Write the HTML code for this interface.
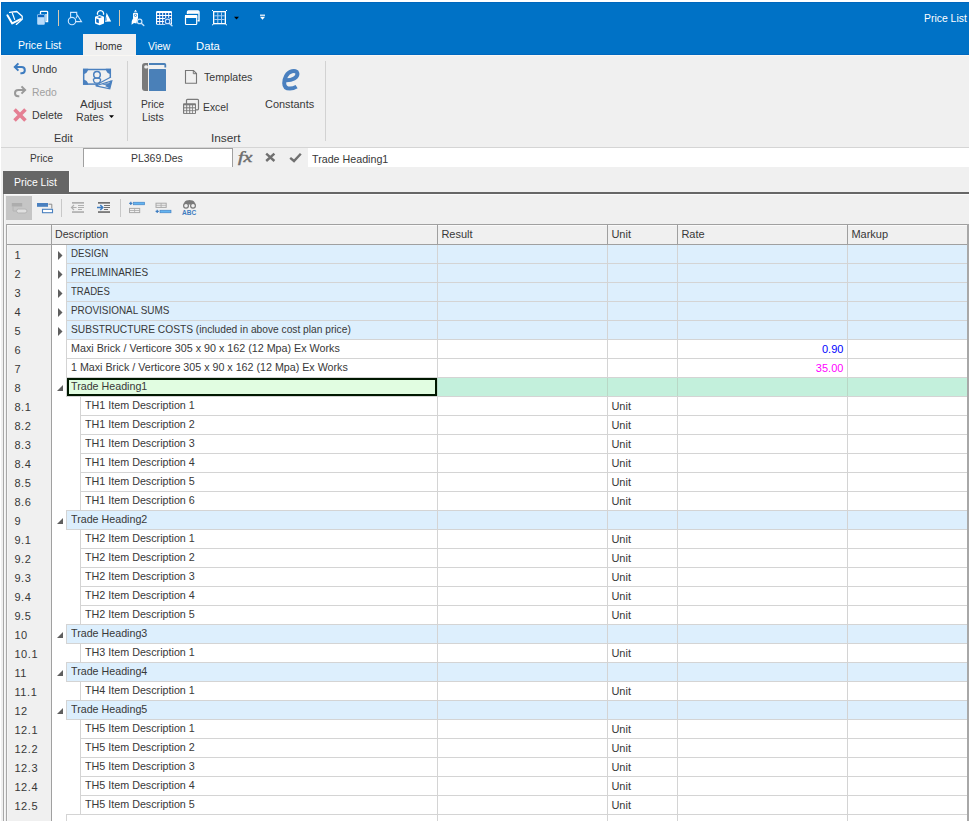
<!DOCTYPE html>
<html><head><meta charset="utf-8"><style>
html,body{margin:0;padding:0;}
body{width:969px;height:821px;overflow:hidden;background:#ffffff;position:relative;font-family:"Liberation Sans",sans-serif;}
.t{position:absolute;white-space:pre;line-height:13px;transform-origin:0 0;}
svg{overflow:visible}
</style></head><body>
<div style="position:absolute;left:1px;top:2px;width:968px;height:53px;background:#0072c6;"></div><div style="position:absolute;left:1px;top:2px;width:968px;height:1px;background:#0067bd;"></div><div style="position:absolute;left:1px;top:2px;width:1px;height:53px;background:#0067bd;"></div><div style="position:absolute;left:1px;top:54px;width:968px;height:1px;background:#0068c0;"></div><div style="position:absolute;left:1px;top:55px;width:968px;height:766px;background:#f0f0f0;"></div><div style="position:absolute;left:1px;top:55px;width:968px;height:1px;background:#f9f7f3;"></div><div style="position:absolute;left:83px;top:34px;width:53px;height:21px;background:#f0f0f0;"></div><div style="position:absolute;left:127px;top:61px;width:1px;height:80px;background:#d2d2d2;"></div><div style="position:absolute;left:325px;top:61px;width:1px;height:80px;background:#d2d2d2;"></div><div style="position:absolute;left:1px;top:147px;width:968px;height:1px;background:#d5d5d5;"></div><div style="position:absolute;left:83px;top:148px;width:150px;height:19px;background:#a0a0a0;"></div><div style="position:absolute;left:84px;top:149px;width:148px;height:18px;background:#ffffff;"></div><div style="position:absolute;left:308px;top:148px;width:661px;height:19px;background:#ffffff;"></div><div style="position:absolute;left:3px;top:171px;width:66px;height:23px;background:#666666;"></div><div style="position:absolute;left:3px;top:192px;width:966px;height:2px;background:#666666;"></div><div style="position:absolute;left:69px;top:171px;width:1px;height:21px;background:#fafafa;"></div><div style="position:absolute;left:3px;top:194px;width:1px;height:700px;background:#a8a8a8;"></div><div style="position:absolute;left:4px;top:194px;width:965px;height:1px;background:#fafafa;"></div><div style="position:absolute;left:6px;top:196px;width:26px;height:24px;background:#c5c5c5;"></div><div style="position:absolute;left:61px;top:199px;width:1px;height:18px;background:#c8c8c8;"></div><div style="position:absolute;left:120px;top:199px;width:1px;height:18px;background:#c8c8c8;"></div><div style="position:absolute;left:6px;top:224px;width:963px;height:1px;background:#a0a0a0;"></div><div style="position:absolute;left:6px;top:224px;width:1px;height:700px;background:#a8a8a8;"></div><div style="position:absolute;left:4px;top:195px;width:1px;height:700px;background:#f8f8f8;"></div><div style="position:absolute;left:7px;top:226px;width:1px;height:700px;background:#f6f6f6;"></div><div style="position:absolute;left:7px;top:225px;width:962px;height:1px;background:#fafafa;"></div><div style="position:absolute;left:967px;top:224px;width:2px;height:700px;background:#a8a8a8;"></div><div style="position:absolute;left:7px;top:244px;width:960px;height:1px;background:#a0a0a0;"></div><div style="position:absolute;left:51px;top:225px;width:1px;height:19px;background:#a0a0a0;"></div><div style="position:absolute;left:437px;top:225px;width:1px;height:19px;background:#a0a0a0;"></div><div style="position:absolute;left:607px;top:225px;width:1px;height:19px;background:#a0a0a0;"></div><div style="position:absolute;left:677px;top:225px;width:1px;height:19px;background:#a0a0a0;"></div><div style="position:absolute;left:847px;top:225px;width:1px;height:19px;background:#a0a0a0;"></div><div style="position:absolute;left:51px;top:245px;width:1px;height:700px;background:#a0a0a0;"></div><div style="position:absolute;left:52px;top:245px;width:14px;height:700px;background:#ffffff;"></div><div style="position:absolute;left:67px;top:245px;width:900px;height:18px;background:#ddeffd;"></div><div style="position:absolute;left:67px;top:263px;width:900px;height:1px;background:#d4d4d4;"></div><div style="position:absolute;left:66px;top:245px;width:1px;height:19px;background:#d4d4d4;"></div><div style="position:absolute;left:437px;top:245px;width:1px;height:18px;background:#d4d4d4;"></div><div style="position:absolute;left:607px;top:245px;width:1px;height:18px;background:#d4d4d4;"></div><div style="position:absolute;left:677px;top:245px;width:1px;height:18px;background:#d4d4d4;"></div><div style="position:absolute;left:847px;top:245px;width:1px;height:18px;background:#d4d4d4;"></div><svg style="position:absolute;left:58px;top:251px" width="5" height="9"><path d="M0 0 L4.5 4.5 L0 9 Z" fill="#5f5f5f"/></svg><div style="position:absolute;left:67px;top:264px;width:900px;height:18px;background:#ddeffd;"></div><div style="position:absolute;left:67px;top:282px;width:900px;height:1px;background:#d4d4d4;"></div><div style="position:absolute;left:66px;top:264px;width:1px;height:19px;background:#d4d4d4;"></div><div style="position:absolute;left:437px;top:264px;width:1px;height:18px;background:#d4d4d4;"></div><div style="position:absolute;left:607px;top:264px;width:1px;height:18px;background:#d4d4d4;"></div><div style="position:absolute;left:677px;top:264px;width:1px;height:18px;background:#d4d4d4;"></div><div style="position:absolute;left:847px;top:264px;width:1px;height:18px;background:#d4d4d4;"></div><svg style="position:absolute;left:58px;top:270px" width="5" height="9"><path d="M0 0 L4.5 4.5 L0 9 Z" fill="#5f5f5f"/></svg><div style="position:absolute;left:67px;top:283px;width:900px;height:18px;background:#ddeffd;"></div><div style="position:absolute;left:67px;top:301px;width:900px;height:1px;background:#d4d4d4;"></div><div style="position:absolute;left:66px;top:283px;width:1px;height:19px;background:#d4d4d4;"></div><div style="position:absolute;left:437px;top:283px;width:1px;height:18px;background:#d4d4d4;"></div><div style="position:absolute;left:607px;top:283px;width:1px;height:18px;background:#d4d4d4;"></div><div style="position:absolute;left:677px;top:283px;width:1px;height:18px;background:#d4d4d4;"></div><div style="position:absolute;left:847px;top:283px;width:1px;height:18px;background:#d4d4d4;"></div><svg style="position:absolute;left:58px;top:289px" width="5" height="9"><path d="M0 0 L4.5 4.5 L0 9 Z" fill="#5f5f5f"/></svg><div style="position:absolute;left:67px;top:302px;width:900px;height:18px;background:#ddeffd;"></div><div style="position:absolute;left:67px;top:320px;width:900px;height:1px;background:#d4d4d4;"></div><div style="position:absolute;left:66px;top:302px;width:1px;height:19px;background:#d4d4d4;"></div><div style="position:absolute;left:437px;top:302px;width:1px;height:18px;background:#d4d4d4;"></div><div style="position:absolute;left:607px;top:302px;width:1px;height:18px;background:#d4d4d4;"></div><div style="position:absolute;left:677px;top:302px;width:1px;height:18px;background:#d4d4d4;"></div><div style="position:absolute;left:847px;top:302px;width:1px;height:18px;background:#d4d4d4;"></div><svg style="position:absolute;left:58px;top:308px" width="5" height="9"><path d="M0 0 L4.5 4.5 L0 9 Z" fill="#5f5f5f"/></svg><div style="position:absolute;left:67px;top:321px;width:900px;height:18px;background:#ddeffd;"></div><div style="position:absolute;left:67px;top:339px;width:900px;height:1px;background:#d4d4d4;"></div><div style="position:absolute;left:66px;top:321px;width:1px;height:19px;background:#d4d4d4;"></div><div style="position:absolute;left:437px;top:321px;width:1px;height:18px;background:#d4d4d4;"></div><div style="position:absolute;left:607px;top:321px;width:1px;height:18px;background:#d4d4d4;"></div><div style="position:absolute;left:677px;top:321px;width:1px;height:18px;background:#d4d4d4;"></div><div style="position:absolute;left:847px;top:321px;width:1px;height:18px;background:#d4d4d4;"></div><svg style="position:absolute;left:58px;top:327px" width="5" height="9"><path d="M0 0 L4.5 4.5 L0 9 Z" fill="#5f5f5f"/></svg><div style="position:absolute;left:67px;top:340px;width:900px;height:18px;background:#ffffff;"></div><div style="position:absolute;left:67px;top:358px;width:900px;height:1px;background:#d4d4d4;"></div><div style="position:absolute;left:66px;top:340px;width:1px;height:19px;background:#d4d4d4;"></div><div style="position:absolute;left:437px;top:340px;width:1px;height:18px;background:#d4d4d4;"></div><div style="position:absolute;left:607px;top:340px;width:1px;height:18px;background:#d4d4d4;"></div><div style="position:absolute;left:677px;top:340px;width:1px;height:18px;background:#d4d4d4;"></div><div style="position:absolute;left:847px;top:340px;width:1px;height:18px;background:#d4d4d4;"></div><div style="position:absolute;left:67px;top:359px;width:900px;height:18px;background:#ffffff;"></div><div style="position:absolute;left:67px;top:377px;width:900px;height:1px;background:#d4d4d4;"></div><div style="position:absolute;left:66px;top:359px;width:1px;height:19px;background:#d4d4d4;"></div><div style="position:absolute;left:437px;top:359px;width:1px;height:18px;background:#d4d4d4;"></div><div style="position:absolute;left:607px;top:359px;width:1px;height:18px;background:#d4d4d4;"></div><div style="position:absolute;left:677px;top:359px;width:1px;height:18px;background:#d4d4d4;"></div><div style="position:absolute;left:847px;top:359px;width:1px;height:18px;background:#d4d4d4;"></div><div style="position:absolute;left:67px;top:378px;width:900px;height:18px;background:#c3f0dc;"></div><div style="position:absolute;left:67px;top:396px;width:900px;height:1px;background:#d4d4d4;"></div><div style="position:absolute;left:66px;top:378px;width:1px;height:19px;background:#d4d4d4;"></div><div style="position:absolute;left:437px;top:378px;width:1px;height:18px;background:#b9d8c6;"></div><div style="position:absolute;left:607px;top:378px;width:1px;height:18px;background:#b9d8c6;"></div><div style="position:absolute;left:677px;top:378px;width:1px;height:18px;background:#b9d8c6;"></div><div style="position:absolute;left:847px;top:378px;width:1px;height:18px;background:#b9d8c6;"></div><svg style="position:absolute;left:56px;top:385px" width="8" height="7"><path d="M7 0 L7 6 L1 6 Z" fill="#5f5f5f"/></svg><div style="position:absolute;left:67px;top:378px;width:366px;height:14px;border:2px solid #001800;background:#e1fde1"></div><div style="position:absolute;left:81px;top:397px;width:886px;height:18px;background:#ffffff;"></div><div style="position:absolute;left:81px;top:415px;width:886px;height:1px;background:#d4d4d4;"></div><div style="position:absolute;left:80px;top:397px;width:1px;height:19px;background:#d4d4d4;"></div><div style="position:absolute;left:66px;top:397px;width:14px;height:19px;background:#ffffff;"></div><div style="position:absolute;left:437px;top:397px;width:1px;height:18px;background:#d4d4d4;"></div><div style="position:absolute;left:607px;top:397px;width:1px;height:18px;background:#d4d4d4;"></div><div style="position:absolute;left:677px;top:397px;width:1px;height:18px;background:#d4d4d4;"></div><div style="position:absolute;left:847px;top:397px;width:1px;height:18px;background:#d4d4d4;"></div><div style="position:absolute;left:81px;top:416px;width:886px;height:18px;background:#ffffff;"></div><div style="position:absolute;left:81px;top:434px;width:886px;height:1px;background:#d4d4d4;"></div><div style="position:absolute;left:80px;top:416px;width:1px;height:19px;background:#d4d4d4;"></div><div style="position:absolute;left:66px;top:416px;width:14px;height:19px;background:#ffffff;"></div><div style="position:absolute;left:437px;top:416px;width:1px;height:18px;background:#d4d4d4;"></div><div style="position:absolute;left:607px;top:416px;width:1px;height:18px;background:#d4d4d4;"></div><div style="position:absolute;left:677px;top:416px;width:1px;height:18px;background:#d4d4d4;"></div><div style="position:absolute;left:847px;top:416px;width:1px;height:18px;background:#d4d4d4;"></div><div style="position:absolute;left:81px;top:435px;width:886px;height:18px;background:#ffffff;"></div><div style="position:absolute;left:81px;top:453px;width:886px;height:1px;background:#d4d4d4;"></div><div style="position:absolute;left:80px;top:435px;width:1px;height:19px;background:#d4d4d4;"></div><div style="position:absolute;left:66px;top:435px;width:14px;height:19px;background:#ffffff;"></div><div style="position:absolute;left:437px;top:435px;width:1px;height:18px;background:#d4d4d4;"></div><div style="position:absolute;left:607px;top:435px;width:1px;height:18px;background:#d4d4d4;"></div><div style="position:absolute;left:677px;top:435px;width:1px;height:18px;background:#d4d4d4;"></div><div style="position:absolute;left:847px;top:435px;width:1px;height:18px;background:#d4d4d4;"></div><div style="position:absolute;left:81px;top:454px;width:886px;height:18px;background:#ffffff;"></div><div style="position:absolute;left:81px;top:472px;width:886px;height:1px;background:#d4d4d4;"></div><div style="position:absolute;left:80px;top:454px;width:1px;height:19px;background:#d4d4d4;"></div><div style="position:absolute;left:66px;top:454px;width:14px;height:19px;background:#ffffff;"></div><div style="position:absolute;left:437px;top:454px;width:1px;height:18px;background:#d4d4d4;"></div><div style="position:absolute;left:607px;top:454px;width:1px;height:18px;background:#d4d4d4;"></div><div style="position:absolute;left:677px;top:454px;width:1px;height:18px;background:#d4d4d4;"></div><div style="position:absolute;left:847px;top:454px;width:1px;height:18px;background:#d4d4d4;"></div><div style="position:absolute;left:81px;top:473px;width:886px;height:18px;background:#ffffff;"></div><div style="position:absolute;left:81px;top:491px;width:886px;height:1px;background:#d4d4d4;"></div><div style="position:absolute;left:80px;top:473px;width:1px;height:19px;background:#d4d4d4;"></div><div style="position:absolute;left:66px;top:473px;width:14px;height:19px;background:#ffffff;"></div><div style="position:absolute;left:437px;top:473px;width:1px;height:18px;background:#d4d4d4;"></div><div style="position:absolute;left:607px;top:473px;width:1px;height:18px;background:#d4d4d4;"></div><div style="position:absolute;left:677px;top:473px;width:1px;height:18px;background:#d4d4d4;"></div><div style="position:absolute;left:847px;top:473px;width:1px;height:18px;background:#d4d4d4;"></div><div style="position:absolute;left:81px;top:492px;width:886px;height:18px;background:#ffffff;"></div><div style="position:absolute;left:81px;top:510px;width:886px;height:1px;background:#d4d4d4;"></div><div style="position:absolute;left:80px;top:492px;width:1px;height:19px;background:#d4d4d4;"></div><div style="position:absolute;left:66px;top:492px;width:14px;height:19px;background:#ffffff;"></div><div style="position:absolute;left:437px;top:492px;width:1px;height:18px;background:#d4d4d4;"></div><div style="position:absolute;left:607px;top:492px;width:1px;height:18px;background:#d4d4d4;"></div><div style="position:absolute;left:677px;top:492px;width:1px;height:18px;background:#d4d4d4;"></div><div style="position:absolute;left:847px;top:492px;width:1px;height:18px;background:#d4d4d4;"></div><div style="position:absolute;left:67px;top:511px;width:900px;height:18px;background:#ddeffd;"></div><div style="position:absolute;left:67px;top:529px;width:900px;height:1px;background:#d4d4d4;"></div><div style="position:absolute;left:66px;top:511px;width:1px;height:19px;background:#d4d4d4;"></div><div style="position:absolute;left:66px;top:510px;width:15px;height:1px;background:#d4d4d4;"></div><div style="position:absolute;left:437px;top:511px;width:1px;height:18px;background:#d4d4d4;"></div><div style="position:absolute;left:607px;top:511px;width:1px;height:18px;background:#d4d4d4;"></div><div style="position:absolute;left:677px;top:511px;width:1px;height:18px;background:#d4d4d4;"></div><div style="position:absolute;left:847px;top:511px;width:1px;height:18px;background:#d4d4d4;"></div><svg style="position:absolute;left:56px;top:518px" width="8" height="7"><path d="M7 0 L7 6 L1 6 Z" fill="#5f5f5f"/></svg><div style="position:absolute;left:81px;top:530px;width:886px;height:18px;background:#ffffff;"></div><div style="position:absolute;left:81px;top:548px;width:886px;height:1px;background:#d4d4d4;"></div><div style="position:absolute;left:80px;top:530px;width:1px;height:19px;background:#d4d4d4;"></div><div style="position:absolute;left:66px;top:530px;width:14px;height:19px;background:#ffffff;"></div><div style="position:absolute;left:437px;top:530px;width:1px;height:18px;background:#d4d4d4;"></div><div style="position:absolute;left:607px;top:530px;width:1px;height:18px;background:#d4d4d4;"></div><div style="position:absolute;left:677px;top:530px;width:1px;height:18px;background:#d4d4d4;"></div><div style="position:absolute;left:847px;top:530px;width:1px;height:18px;background:#d4d4d4;"></div><div style="position:absolute;left:81px;top:549px;width:886px;height:18px;background:#ffffff;"></div><div style="position:absolute;left:81px;top:567px;width:886px;height:1px;background:#d4d4d4;"></div><div style="position:absolute;left:80px;top:549px;width:1px;height:19px;background:#d4d4d4;"></div><div style="position:absolute;left:66px;top:549px;width:14px;height:19px;background:#ffffff;"></div><div style="position:absolute;left:437px;top:549px;width:1px;height:18px;background:#d4d4d4;"></div><div style="position:absolute;left:607px;top:549px;width:1px;height:18px;background:#d4d4d4;"></div><div style="position:absolute;left:677px;top:549px;width:1px;height:18px;background:#d4d4d4;"></div><div style="position:absolute;left:847px;top:549px;width:1px;height:18px;background:#d4d4d4;"></div><div style="position:absolute;left:81px;top:568px;width:886px;height:18px;background:#ffffff;"></div><div style="position:absolute;left:81px;top:586px;width:886px;height:1px;background:#d4d4d4;"></div><div style="position:absolute;left:80px;top:568px;width:1px;height:19px;background:#d4d4d4;"></div><div style="position:absolute;left:66px;top:568px;width:14px;height:19px;background:#ffffff;"></div><div style="position:absolute;left:437px;top:568px;width:1px;height:18px;background:#d4d4d4;"></div><div style="position:absolute;left:607px;top:568px;width:1px;height:18px;background:#d4d4d4;"></div><div style="position:absolute;left:677px;top:568px;width:1px;height:18px;background:#d4d4d4;"></div><div style="position:absolute;left:847px;top:568px;width:1px;height:18px;background:#d4d4d4;"></div><div style="position:absolute;left:81px;top:587px;width:886px;height:18px;background:#ffffff;"></div><div style="position:absolute;left:81px;top:605px;width:886px;height:1px;background:#d4d4d4;"></div><div style="position:absolute;left:80px;top:587px;width:1px;height:19px;background:#d4d4d4;"></div><div style="position:absolute;left:66px;top:587px;width:14px;height:19px;background:#ffffff;"></div><div style="position:absolute;left:437px;top:587px;width:1px;height:18px;background:#d4d4d4;"></div><div style="position:absolute;left:607px;top:587px;width:1px;height:18px;background:#d4d4d4;"></div><div style="position:absolute;left:677px;top:587px;width:1px;height:18px;background:#d4d4d4;"></div><div style="position:absolute;left:847px;top:587px;width:1px;height:18px;background:#d4d4d4;"></div><div style="position:absolute;left:81px;top:606px;width:886px;height:18px;background:#ffffff;"></div><div style="position:absolute;left:81px;top:624px;width:886px;height:1px;background:#d4d4d4;"></div><div style="position:absolute;left:80px;top:606px;width:1px;height:19px;background:#d4d4d4;"></div><div style="position:absolute;left:66px;top:606px;width:14px;height:19px;background:#ffffff;"></div><div style="position:absolute;left:437px;top:606px;width:1px;height:18px;background:#d4d4d4;"></div><div style="position:absolute;left:607px;top:606px;width:1px;height:18px;background:#d4d4d4;"></div><div style="position:absolute;left:677px;top:606px;width:1px;height:18px;background:#d4d4d4;"></div><div style="position:absolute;left:847px;top:606px;width:1px;height:18px;background:#d4d4d4;"></div><div style="position:absolute;left:67px;top:625px;width:900px;height:18px;background:#ddeffd;"></div><div style="position:absolute;left:67px;top:643px;width:900px;height:1px;background:#d4d4d4;"></div><div style="position:absolute;left:66px;top:625px;width:1px;height:19px;background:#d4d4d4;"></div><div style="position:absolute;left:66px;top:624px;width:15px;height:1px;background:#d4d4d4;"></div><div style="position:absolute;left:437px;top:625px;width:1px;height:18px;background:#d4d4d4;"></div><div style="position:absolute;left:607px;top:625px;width:1px;height:18px;background:#d4d4d4;"></div><div style="position:absolute;left:677px;top:625px;width:1px;height:18px;background:#d4d4d4;"></div><div style="position:absolute;left:847px;top:625px;width:1px;height:18px;background:#d4d4d4;"></div><svg style="position:absolute;left:56px;top:632px" width="8" height="7"><path d="M7 0 L7 6 L1 6 Z" fill="#5f5f5f"/></svg><div style="position:absolute;left:81px;top:644px;width:886px;height:18px;background:#ffffff;"></div><div style="position:absolute;left:81px;top:662px;width:886px;height:1px;background:#d4d4d4;"></div><div style="position:absolute;left:80px;top:644px;width:1px;height:19px;background:#d4d4d4;"></div><div style="position:absolute;left:66px;top:644px;width:14px;height:19px;background:#ffffff;"></div><div style="position:absolute;left:437px;top:644px;width:1px;height:18px;background:#d4d4d4;"></div><div style="position:absolute;left:607px;top:644px;width:1px;height:18px;background:#d4d4d4;"></div><div style="position:absolute;left:677px;top:644px;width:1px;height:18px;background:#d4d4d4;"></div><div style="position:absolute;left:847px;top:644px;width:1px;height:18px;background:#d4d4d4;"></div><div style="position:absolute;left:67px;top:663px;width:900px;height:18px;background:#ddeffd;"></div><div style="position:absolute;left:67px;top:681px;width:900px;height:1px;background:#d4d4d4;"></div><div style="position:absolute;left:66px;top:663px;width:1px;height:19px;background:#d4d4d4;"></div><div style="position:absolute;left:66px;top:662px;width:15px;height:1px;background:#d4d4d4;"></div><div style="position:absolute;left:437px;top:663px;width:1px;height:18px;background:#d4d4d4;"></div><div style="position:absolute;left:607px;top:663px;width:1px;height:18px;background:#d4d4d4;"></div><div style="position:absolute;left:677px;top:663px;width:1px;height:18px;background:#d4d4d4;"></div><div style="position:absolute;left:847px;top:663px;width:1px;height:18px;background:#d4d4d4;"></div><svg style="position:absolute;left:56px;top:670px" width="8" height="7"><path d="M7 0 L7 6 L1 6 Z" fill="#5f5f5f"/></svg><div style="position:absolute;left:81px;top:682px;width:886px;height:18px;background:#ffffff;"></div><div style="position:absolute;left:81px;top:700px;width:886px;height:1px;background:#d4d4d4;"></div><div style="position:absolute;left:80px;top:682px;width:1px;height:19px;background:#d4d4d4;"></div><div style="position:absolute;left:66px;top:682px;width:14px;height:19px;background:#ffffff;"></div><div style="position:absolute;left:437px;top:682px;width:1px;height:18px;background:#d4d4d4;"></div><div style="position:absolute;left:607px;top:682px;width:1px;height:18px;background:#d4d4d4;"></div><div style="position:absolute;left:677px;top:682px;width:1px;height:18px;background:#d4d4d4;"></div><div style="position:absolute;left:847px;top:682px;width:1px;height:18px;background:#d4d4d4;"></div><div style="position:absolute;left:67px;top:701px;width:900px;height:18px;background:#ddeffd;"></div><div style="position:absolute;left:67px;top:719px;width:900px;height:1px;background:#d4d4d4;"></div><div style="position:absolute;left:66px;top:701px;width:1px;height:19px;background:#d4d4d4;"></div><div style="position:absolute;left:66px;top:700px;width:15px;height:1px;background:#d4d4d4;"></div><div style="position:absolute;left:437px;top:701px;width:1px;height:18px;background:#d4d4d4;"></div><div style="position:absolute;left:607px;top:701px;width:1px;height:18px;background:#d4d4d4;"></div><div style="position:absolute;left:677px;top:701px;width:1px;height:18px;background:#d4d4d4;"></div><div style="position:absolute;left:847px;top:701px;width:1px;height:18px;background:#d4d4d4;"></div><svg style="position:absolute;left:56px;top:708px" width="8" height="7"><path d="M7 0 L7 6 L1 6 Z" fill="#5f5f5f"/></svg><div style="position:absolute;left:81px;top:720px;width:886px;height:18px;background:#ffffff;"></div><div style="position:absolute;left:81px;top:738px;width:886px;height:1px;background:#d4d4d4;"></div><div style="position:absolute;left:80px;top:720px;width:1px;height:19px;background:#d4d4d4;"></div><div style="position:absolute;left:66px;top:720px;width:14px;height:19px;background:#ffffff;"></div><div style="position:absolute;left:437px;top:720px;width:1px;height:18px;background:#d4d4d4;"></div><div style="position:absolute;left:607px;top:720px;width:1px;height:18px;background:#d4d4d4;"></div><div style="position:absolute;left:677px;top:720px;width:1px;height:18px;background:#d4d4d4;"></div><div style="position:absolute;left:847px;top:720px;width:1px;height:18px;background:#d4d4d4;"></div><div style="position:absolute;left:81px;top:739px;width:886px;height:18px;background:#ffffff;"></div><div style="position:absolute;left:81px;top:757px;width:886px;height:1px;background:#d4d4d4;"></div><div style="position:absolute;left:80px;top:739px;width:1px;height:19px;background:#d4d4d4;"></div><div style="position:absolute;left:66px;top:739px;width:14px;height:19px;background:#ffffff;"></div><div style="position:absolute;left:437px;top:739px;width:1px;height:18px;background:#d4d4d4;"></div><div style="position:absolute;left:607px;top:739px;width:1px;height:18px;background:#d4d4d4;"></div><div style="position:absolute;left:677px;top:739px;width:1px;height:18px;background:#d4d4d4;"></div><div style="position:absolute;left:847px;top:739px;width:1px;height:18px;background:#d4d4d4;"></div><div style="position:absolute;left:81px;top:758px;width:886px;height:18px;background:#ffffff;"></div><div style="position:absolute;left:81px;top:776px;width:886px;height:1px;background:#d4d4d4;"></div><div style="position:absolute;left:80px;top:758px;width:1px;height:19px;background:#d4d4d4;"></div><div style="position:absolute;left:66px;top:758px;width:14px;height:19px;background:#ffffff;"></div><div style="position:absolute;left:437px;top:758px;width:1px;height:18px;background:#d4d4d4;"></div><div style="position:absolute;left:607px;top:758px;width:1px;height:18px;background:#d4d4d4;"></div><div style="position:absolute;left:677px;top:758px;width:1px;height:18px;background:#d4d4d4;"></div><div style="position:absolute;left:847px;top:758px;width:1px;height:18px;background:#d4d4d4;"></div><div style="position:absolute;left:81px;top:777px;width:886px;height:18px;background:#ffffff;"></div><div style="position:absolute;left:81px;top:795px;width:886px;height:1px;background:#d4d4d4;"></div><div style="position:absolute;left:80px;top:777px;width:1px;height:19px;background:#d4d4d4;"></div><div style="position:absolute;left:66px;top:777px;width:14px;height:19px;background:#ffffff;"></div><div style="position:absolute;left:437px;top:777px;width:1px;height:18px;background:#d4d4d4;"></div><div style="position:absolute;left:607px;top:777px;width:1px;height:18px;background:#d4d4d4;"></div><div style="position:absolute;left:677px;top:777px;width:1px;height:18px;background:#d4d4d4;"></div><div style="position:absolute;left:847px;top:777px;width:1px;height:18px;background:#d4d4d4;"></div><div style="position:absolute;left:81px;top:796px;width:886px;height:18px;background:#ffffff;"></div><div style="position:absolute;left:81px;top:814px;width:886px;height:1px;background:#d4d4d4;"></div><div style="position:absolute;left:80px;top:796px;width:1px;height:19px;background:#d4d4d4;"></div><div style="position:absolute;left:66px;top:796px;width:14px;height:19px;background:#ffffff;"></div><div style="position:absolute;left:437px;top:796px;width:1px;height:18px;background:#d4d4d4;"></div><div style="position:absolute;left:607px;top:796px;width:1px;height:18px;background:#d4d4d4;"></div><div style="position:absolute;left:677px;top:796px;width:1px;height:18px;background:#d4d4d4;"></div><div style="position:absolute;left:847px;top:796px;width:1px;height:18px;background:#d4d4d4;"></div><div style="position:absolute;left:67px;top:815px;width:900px;height:18px;background:#ffffff;"></div><div style="position:absolute;left:67px;top:833px;width:900px;height:1px;background:#d4d4d4;"></div><div style="position:absolute;left:66px;top:815px;width:1px;height:19px;background:#d4d4d4;"></div><div style="position:absolute;left:66px;top:814px;width:15px;height:1px;background:#d4d4d4;"></div><div style="position:absolute;left:437px;top:815px;width:1px;height:18px;background:#d4d4d4;"></div><div style="position:absolute;left:607px;top:815px;width:1px;height:18px;background:#d4d4d4;"></div><div style="position:absolute;left:677px;top:815px;width:1px;height:18px;background:#d4d4d4;"></div><div style="position:absolute;left:847px;top:815px;width:1px;height:18px;background:#d4d4d4;"></div>
<svg style="position:absolute;left:0;top:0" width="969" height="821" viewBox="0 0 969 821">
<!-- QAT icons (white on blue) -->
<g fill="none" stroke="#ffffff" stroke-linecap="round" stroke-linejoin="round">
  <path d="M7.4 15.3 L12.2 23.4 L20.6 19.2" stroke-width="2"/>
  <path d="M9.6 12.4 L16.8 11.5 L22.2 16.3 L22.2 19.2 L16.3 24.4" stroke-width="1.3"/>
  <path d="M12.3 13 L14.6 19.4" stroke-width="1.2"/>
</g>
<!-- books -->
<path d="M40.5 14 L40.5 12 Q40.5 11.3 41.3 11.3 L46.8 11.3 Q47.6 11.3 47.6 12 L47.6 21.6 L46 21.6 L46 14" fill="none" stroke="#ffffff" stroke-width="1.3"/>
<rect x="37.2" y="14.2" width="7.6" height="10.5" rx="1" fill="#b9dcfb"/>
<rect x="37.8" y="14.8" width="6.4" height="2.4" fill="#0a64c0"/>
<!-- shapes outline -->
<g fill="none" stroke="#cfe6ff" stroke-width="1.1">
  <path d="M70.6 17.6 L70.6 12.4 L76.7 12.4 L76.7 15.5"/>
  <circle cx="72" cy="21.1" r="3.7"/>
  <path d="M76 18.2 L77.5 15.3 L81.5 21.6 L75.8 21.6"/>
</g>
<!-- 3d shapes -->
<path d="M97.6 14.8 A3.1 3.1 0 1 1 103.4 14.8" fill="none" stroke="#ffffff" stroke-width="1.3"/>
<path d="M95 16.8 L99.6 15 L104 16.8 L104 23.4 L99.6 25.2 L95 23.4 Z" fill="#ffffff"/>
<path d="M96.2 18.4 L98.8 19.6 L98.8 23.2 L96.2 22.2 Z" fill="#0a6ac4"/>
<path d="M97.2 17 L99.6 16.2 L102 17 L99.6 17.9 Z" fill="#0a6ac4"/>
<path d="M106.6 12.8 L111.2 21.4 L105 21.8 Z" fill="#ffffff"/>
<path d="M106.2 16.5 L106.6 20.4 L105.4 20.7 Z" fill="#0a6ac4"/>
<!-- rocket -->
<path d="M134 11.8 L135.5 9.8 L137 11.8 Z" fill="#ffffff"/>
<rect x="133" y="12.8" width="5" height="6.5" rx="1.2" fill="#ffffff"/>
<circle cx="135.5" cy="15.4" r="1.1" fill="none" stroke="#2a84d0" stroke-width="0.9"/>
<path d="M133 18.5 L137.5 18.5 L136.5 23.5 L134 23 L131.5 24.8 Q131 21 133 18.5 Z" fill="#ffffff"/>
<circle cx="139.6" cy="21.4" r="2.3" fill="none" stroke="#c8e2fa" stroke-width="1.2"/>
<path d="M141.3 23.2 L143.8 25.6" stroke="#c8e2fa" stroke-width="1.4" stroke-linecap="round"/>
<!-- grid + magnifier -->
<rect x="156" y="11" width="16" height="13.8" rx="1.2" fill="#ffffff"/>
<g fill="#0a62c0">
  <rect x="157.2" y="13" width="2" height="2"/><rect x="160.2" y="13" width="2" height="2"/><rect x="163.2" y="13" width="2" height="2"/><rect x="166.2" y="13" width="2" height="2"/><rect x="169.2" y="13" width="2" height="2"/>
  <rect x="157.2" y="16" width="2" height="2"/><rect x="160.2" y="16" width="2" height="2"/><rect x="163.2" y="16" width="2" height="2"/><rect x="166.2" y="16" width="2" height="2"/><rect x="169.2" y="16" width="2" height="2"/>
  <rect x="157.2" y="19" width="2" height="2"/><rect x="160.2" y="19" width="2" height="2"/><rect x="163.2" y="19" width="2" height="2"/>
  <rect x="157.2" y="22" width="2" height="2"/><rect x="160.2" y="22" width="2" height="2"/><rect x="163.2" y="22" width="2" height="2"/>
</g>
<circle cx="167.6" cy="21.4" r="3.6" fill="#0a62c0"/>
<circle cx="167.6" cy="21.4" r="2.3" fill="none" stroke="#c8e2fa" stroke-width="1.2"/>
<path d="M169.3 23.2 L172 25.8" stroke="#c8e2fa" stroke-width="1.4" stroke-linecap="round"/>
<!-- windows -->
<path d="M187.5 14 L187.5 12 Q187.5 11 188.5 11 L198 11 Q199 11 199 12 L199 20.8 L197.6 20.8" fill="none" stroke="#ffffff" stroke-width="1.4"/>
<rect x="187.2" y="11.2" width="11.5" height="2.6" fill="#ffffff"/>
<rect x="185.5" y="15.5" width="11.2" height="9" rx="0.8" fill="none" stroke="#ffffff" stroke-width="1.2"/>
<rect x="185" y="15" width="12.2" height="3" fill="#ffffff"/>
<!-- grid -->
<g fill="#ffffff">
  <rect x="213" y="11" width="13" height="1.3"/><rect x="213" y="23" width="13" height="1.3"/>
  <rect x="213" y="11" width="1.3" height="13.3"/><rect x="224.7" y="11" width="1.3" height="13.3"/>
  <rect x="212" y="10" width="1" height="1"/><rect x="226" y="10" width="1" height="1"/><rect x="212" y="24.3" width="1" height="1"/><rect x="226" y="24.3" width="1" height="1"/>
</g>
<g fill="#a9cdf2">
  <rect x="217.3" y="12.3" width="1" height="10.7"/><rect x="221" y="12.3" width="1" height="10.7"/>
  <rect x="214.3" y="15.3" width="10.4" height="1"/><rect x="214.3" y="19" width="10.4" height="1"/>
</g>
<path d="M234 16.8 L239 16.8 L236.5 19.6 Z" fill="#000000"/>
<rect x="260" y="14.6" width="5" height="1.2" fill="#ffffff"/>
<path d="M260 16.8 L265 16.8 L262.5 19.8 Z" fill="#ffffff"/>
<!-- QAT separators -->
<rect x="58" y="10" width="1" height="16" fill="#d7c9b0"/>
<rect x="119" y="10" width="1" height="16" fill="#d7c9b0"/>

<!-- ribbon icons -->
<path d="M14.6 67 L21.5 67 Q24.8 67 24.8 70.2 Q24.8 73.2 21.6 73.2 L20.4 73.2" fill="none" stroke="#3d7cc0" stroke-width="2"/>
<path d="M18.4 63.4 L14.8 67 L18.4 70.6" fill="none" stroke="#3d7cc0" stroke-width="2"/>
<path d="M25.2 90 L18.4 90 Q15 90 15 93.2 Q15 96.2 18.2 96.2 L19.3 96.2" fill="none" stroke="#999999" stroke-width="2"/>
<path d="M21.5 86.4 L25.1 90 L21.5 93.6" fill="none" stroke="#999999" stroke-width="2"/>
<path d="M15.8 110.8 L24.2 119.2 M24.2 110.8 L15.8 119.2" stroke="#e57f93" stroke-width="3.6" stroke-linecap="square"/>
<!-- adjust rates -->
<defs><clipPath id="note"><rect x="83" y="68.8" width="28" height="16"/></clipPath></defs>
<rect x="83.7" y="69.5" width="26.6" height="14.6" fill="none" stroke="#4a80bf" stroke-width="1.5"/>
<g clip-path="url(#note)" fill="#4a80bf">
  <circle cx="83" cy="68.8" r="5.2"/><circle cx="111" cy="68.8" r="5.2"/><circle cx="83" cy="84.8" r="5.2"/>
</g>
<circle cx="97" cy="74.7" r="3.3" fill="none" stroke="#4a80bf" stroke-width="1.5"/>
<path d="M93.4 79.2 Q94.5 78.2 97 78.2 Q99.5 78.2 100.6 79.2 Q100.6 83.2 97 83.2 Q93.4 83.2 93.4 79.2 Z" fill="none" stroke="#4a80bf" stroke-width="1.3"/>
<path d="M95 86 L112 76.5 L112 80 L98 87 Z" fill="#f0f0f0"/>
<path d="M95.5 85.3 L111 77" fill="none" stroke="#4a80bf" stroke-width="1.2"/>
<path d="M95.8 85.8 L111.8 81 L109.8 88.8 Z" fill="none" stroke="#4a80bf" stroke-width="1.2"/>
<path d="M105 86 L111.6 81.3 L109.8 88.6 Z" fill="#4a80bf"/>
<path d="M109 115.2 L114 115.2 L111.5 118 Z" fill="#000000"/>
<!-- price lists book -->
<path d="M145 63 L148 63 L148 91 L145 91 Q142 91 142 88 L142 66 Q142 63 145 63 Z" fill="#7a7a7a"/>
<rect x="144.2" y="65.2" width="3.8" height="3.4" rx="1.6" fill="#f0f0f0"/>
<rect x="149" y="69" width="17" height="22" rx="0.6" fill="#4a80b8"/>
<path d="M149 64 L164.5 64 Q165.3 64 165.3 64.8 L165.3 67.6" fill="none" stroke="#4a80b8" stroke-width="1.8"/>
<!-- templates page -->
<path d="M185.5 70.5 L193.5 70.5 L196.5 73.5 L196.5 83.3 L185.5 83.3 Z" fill="none" stroke="#767676" stroke-width="1.1"/>
<path d="M193.3 70.5 L193.3 73.7 L196.5 73.7" fill="none" stroke="#767676" stroke-width="1"/>
<!-- excel grids -->
<rect x="186.5" y="99.3" width="12" height="10.5" rx="1" fill="none" stroke="#7a7a7a" stroke-width="1.2"/>
<rect x="183" y="103.2" width="13" height="10.8" rx="1" fill="#7a7a7a"/>
<g fill="#f0f0f0">
 <rect x="184.2" y="105.3" width="2" height="2"/><rect x="187.2" y="105.3" width="2" height="2"/><rect x="190.2" y="105.3" width="2" height="2"/><rect x="193" y="105.3" width="2" height="2"/>
 <rect x="184.2" y="108.3" width="2" height="2"/><rect x="187.2" y="108.3" width="2" height="2"/><rect x="190.2" y="108.3" width="2" height="2"/><rect x="193" y="108.3" width="2" height="2"/>
 <rect x="184.2" y="111.1" width="2" height="2"/><rect x="187.2" y="111.1" width="2" height="2"/><rect x="190.2" y="111.1" width="2" height="2"/><rect x="193" y="111.1" width="2" height="2"/>
</g>
<!-- constants e -->
<path d="M285.8 80.2 C292 80.4 298 77.6 297.4 73.4 C297 71 294.2 70.9 292 71.3 C286.6 72.4 284.2 78.6 284.2 83.2 C284.2 87.2 286.8 88.6 290 88.6 C292.4 88.6 294.6 87.8 296.6 86.6" fill="none" stroke="#4a80bf" stroke-width="4"/>
<!-- formula bar icons -->
<text x="238" y="161.6" font-family="Liberation Serif" font-style="italic" font-size="15" fill="#6e6e6e" stroke="#6e6e6e" stroke-width="0.45" textLength="14.5" lengthAdjust="spacingAndGlyphs">fx</text>
<path d="M266.2 153.6 L274.4 161 M274.4 153.6 L266.2 161" stroke="#707070" stroke-width="2.4"/>
<path d="M290.2 157.8 L294 161 L300.8 153.8" fill="none" stroke="#707070" stroke-width="2.4"/>

<!-- toolbar icons -->
<rect x="11.8" y="203" width="10.4" height="3.5" fill="#adadad"/>
<path d="M13 206.5 L13 211 L16 211" fill="none" stroke="#b4b4b4" stroke-width="1"/>
<rect x="16.5" y="209" width="10.5" height="4" rx="2" fill="#e0e0e0" stroke="#b4b4b4" stroke-width="1"/>
<rect x="37" y="203" width="11" height="3.8" fill="#4a80bf"/>
<path d="M48.5 204.2 L51.8 204.2 L51.8 208.5" fill="none" stroke="#8a8a8a" stroke-width="1"/>
<rect x="42.5" y="209.3" width="10" height="3.4" fill="#ffffff" stroke="#4a80bf" stroke-width="1.1"/>
<!-- outdent -->
<g fill="#b0b0b0">
 <rect x="72" y="202" width="12" height="1.7"/><rect x="72" y="211.2" width="12" height="1.7"/>
 <rect x="78" y="205" width="6" height="1"/><rect x="78" y="207" width="6" height="1"/><rect x="78" y="209" width="4" height="1"/>
</g>
<path d="M76.6 207.5 L71.6 207.5 M74 205 L71.5 207.5 L74 210" fill="none" stroke="#b0b0b0" stroke-width="1.2"/>
<!-- indent -->
<g fill="#707070">
 <rect x="98" y="202" width="12" height="1.7"/><rect x="98" y="211.2" width="12" height="1.7"/>
 <rect x="104" y="205" width="6" height="1"/><rect x="104" y="207" width="6" height="1"/><rect x="104" y="209" width="4" height="1"/>
</g>
<path d="M97 207.5 L102.5 207.5 M100.3 205 L102.8 207.5 L100.3 210" fill="none" stroke="#3d7cc0" stroke-width="1.5"/>
<!-- insert row above -->
<path d="M129.2 203.4 L132.4 203.4 M130.8 201.8 L130.8 205" stroke="#3d7cc0" stroke-width="1.2"/>
<rect x="133.6" y="202.2" width="11" height="2.6" fill="#63b4f0" stroke="#3d7cc0" stroke-width="0.6"/>
<rect x="129.5" y="208.4" width="10.2" height="4.2" fill="none" stroke="#a8a8a8" stroke-width="1"/>
<path d="M129.5 210.5 L139.7 210.5 M134.6 208.4 L134.6 212.6" stroke="#a8a8a8" stroke-width="0.8"/>
<!-- insert row below -->
<rect x="156" y="203.2" width="10.2" height="4.2" fill="none" stroke="#a8a8a8" stroke-width="1"/>
<path d="M156 205.3 L166.2 205.3 M161.1 203.2 L161.1 207.4" stroke="#a8a8a8" stroke-width="0.8"/>
<path d="M155.6 211.4 L158.8 211.4 M157.2 209.8 L157.2 213" stroke="#3d7cc0" stroke-width="1.2"/>
<rect x="160" y="210.2" width="11" height="2.6" fill="#63b4f0" stroke="#3d7cc0" stroke-width="0.6"/>
<!-- binoculars ABC -->
<path d="M183.5 204.5 Q184.5 200 188.5 200.2 Q189.5 200 190.5 200.2 Q194.5 200 195.5 204.5 Z" fill="#7a7a7a"/>
<circle cx="186" cy="205.8" r="2.4" fill="#f0f0f0" stroke="#7a7a7a" stroke-width="1.2"/>
<circle cx="193" cy="205.8" r="2.4" fill="#f0f0f0" stroke="#7a7a7a" stroke-width="1.2"/>
<text x="182" y="214.6" font-family="Liberation Sans" font-weight="bold" font-size="7.2" fill="#3d7cc0" textLength="14.2" lengthAdjust="spacingAndGlyphs">ABC</text>
</svg>

<span class="t" style="left:924.43px;top:11.70px;color:#ffffff;font-size:11px;transform:scaleX(0.9459);">Price List</span><span class="t" style="left:17.93px;top:38.70px;color:#ffffff;font-size:11px;transform:scaleX(0.9569);">Price List</span><span class="t" style="left:95.15px;top:39.70px;color:#303030;font-size:11px;transform:scaleX(0.9235);">Home</span><span class="t" style="left:148.43px;top:39.70px;color:#ffffff;font-size:11px;transform:scaleX(0.9427);">View</span><span class="t" style="left:195.79px;top:39.70px;color:#ffffff;font-size:11px;transform:scaleX(1.0237);">Data</span><span class="t" style="left:32.13px;top:62.70px;color:#383838;font-size:11px;transform:scaleX(0.9545);">Undo</span><span class="t" style="left:32.43px;top:85.70px;color:#a0a0a0;font-size:11px;transform:scaleX(0.9431);">Redo</span><span class="t" style="left:32.42px;top:108.70px;color:#383838;font-size:11px;transform:scaleX(0.9686);">Delete</span><span class="t" style="left:79.98px;top:97.70px;color:#383838;font-size:11px;transform:scaleX(1.0400);">Adjust</span><span class="t" style="left:76.22px;top:110.70px;color:#383838;font-size:11px;transform:scaleX(0.9670);">Rates</span><span class="t" style="left:54.41px;top:131.70px;color:#383838;font-size:11px;transform:scaleX(0.9911);">Edit</span><span class="t" style="left:140.94px;top:97.70px;color:#383838;font-size:11px;transform:scaleX(0.9297);">Price</span><span class="t" style="left:141.82px;top:110.70px;color:#383838;font-size:11px;transform:scaleX(0.9635);">Lists</span><span class="t" style="left:203.82px;top:70.70px;color:#383838;font-size:11px;transform:scaleX(0.9653);">Templates</span><span class="t" style="left:203.14px;top:100.70px;color:#383838;font-size:11px;transform:scaleX(0.9403);">Excel</span><span class="t" style="left:265.20px;top:97.70px;color:#383838;font-size:11px;transform:scaleX(0.9933);">Constants</span><span class="t" style="left:211.35px;top:131.70px;color:#383838;font-size:11px;transform:scaleX(1.0758);">Insert</span><span class="t" style="left:30.15px;top:151.70px;color:#383838;font-size:11px;transform:scaleX(0.9217);">Price</span><span class="t" style="left:130.83px;top:151.70px;color:#383838;font-size:11px;transform:scaleX(0.9515);">PL369.Des</span><span class="t" style="left:311.62px;top:152.70px;color:#383838;font-size:11px;transform:scaleX(0.9722);">Trade Heading1</span><span class="t" style="left:14.23px;top:175.70px;color:#ffffff;font-size:11px;transform:scaleX(0.9459);">Price List</span><span class="t" style="left:55.22px;top:227.70px;color:#383838;font-size:11px;transform:scaleX(0.9667);">Description</span><span class="t" style="left:441.40px;top:227.70px;color:#383838;font-size:11px;transform:scaleX(1.0000);">Result</span><span class="t" style="left:611.40px;top:227.70px;color:#383838;font-size:11px;transform:scaleX(1.0000);">Unit</span><span class="t" style="left:681.40px;top:227.70px;color:#383838;font-size:11px;transform:scaleX(1.0000);">Rate</span><span class="t" style="left:851.40px;top:227.70px;color:#383838;font-size:11px;transform:scaleX(1.0000);">Markup</span><span class="t" style="left:14.40px;top:248.70px;color:#383838;font-size:11px;transform:scaleX(1.0000);letter-spacing:0.6px">1</span><span class="t" style="left:71.47px;top:246.70px;color:#383838;font-size:11px;transform:scaleX(0.8818);">DESIGN</span><span class="t" style="left:14.40px;top:267.70px;color:#383838;font-size:11px;transform:scaleX(1.0000);letter-spacing:0.6px">2</span><span class="t" style="left:71.46px;top:265.70px;color:#383838;font-size:11px;transform:scaleX(0.9074);">PRELIMINARIES</span><span class="t" style="left:14.40px;top:286.70px;color:#383838;font-size:11px;transform:scaleX(1.0000);letter-spacing:0.6px">3</span><span class="t" style="left:71.48px;top:284.70px;color:#383838;font-size:11px;transform:scaleX(0.8695);">TRADES</span><span class="t" style="left:14.40px;top:305.70px;color:#383838;font-size:11px;transform:scaleX(1.0000);letter-spacing:0.6px">4</span><span class="t" style="left:71.46px;top:303.70px;color:#383838;font-size:11px;transform:scaleX(0.9017);">PROVISIONAL SUMS</span><span class="t" style="left:14.40px;top:324.70px;color:#383838;font-size:11px;transform:scaleX(1.0000);letter-spacing:0.6px">5</span><span class="t" style="left:71.44px;top:322.70px;color:#383838;font-size:11px;transform:scaleX(0.9284);">SUBSTRUCTURE COSTS (included in above cost plan price)</span><span class="t" style="left:14.40px;top:343.70px;color:#383838;font-size:11px;transform:scaleX(1.0000);letter-spacing:0.6px">6</span><span class="t" style="left:71.41px;top:341.70px;color:#383838;font-size:11px;transform:scaleX(0.9756);">Maxi Brick / Verticore 305 x 90 x 162 (12 Mpa) Ex Works</span><span class="t" style="left:821.98px;top:342.70px;color:#0000ff;font-size:11px;transform:scaleX(1.0000);">0.90</span><span class="t" style="left:14.40px;top:362.70px;color:#383838;font-size:11px;transform:scaleX(1.0000);letter-spacing:0.6px">7</span><span class="t" style="left:71.42px;top:360.70px;color:#383838;font-size:11px;transform:scaleX(0.9723);">1 Maxi Brick / Verticore 305 x 90 x 162 (12 Mpa) Ex Works</span><span class="t" style="left:815.87px;top:361.70px;color:#ff00ff;font-size:11px;transform:scaleX(1.0000);">35.00</span><span class="t" style="left:14.40px;top:381.70px;color:#383838;font-size:11px;transform:scaleX(1.0000);letter-spacing:0.6px">8</span><span class="t" style="left:71.42px;top:379.70px;color:#383838;font-size:11px;transform:scaleX(0.9722);">Trade Heading1</span><span class="t" style="left:14.40px;top:400.70px;color:#383838;font-size:11px;transform:scaleX(1.0000);letter-spacing:0.6px">8.1</span><span class="t" style="left:85.41px;top:398.70px;color:#383838;font-size:11px;transform:scaleX(0.9761);">TH1 Item Description 1</span><span class="t" style="left:611.40px;top:399.70px;color:#383838;font-size:11px;transform:scaleX(1.0000);">Unit</span><span class="t" style="left:14.40px;top:419.70px;color:#383838;font-size:11px;transform:scaleX(1.0000);letter-spacing:0.6px">8.2</span><span class="t" style="left:85.41px;top:417.70px;color:#383838;font-size:11px;transform:scaleX(0.9761);">TH1 Item Description 2</span><span class="t" style="left:611.40px;top:418.70px;color:#383838;font-size:11px;transform:scaleX(1.0000);">Unit</span><span class="t" style="left:14.40px;top:438.70px;color:#383838;font-size:11px;transform:scaleX(1.0000);letter-spacing:0.6px">8.3</span><span class="t" style="left:85.41px;top:436.70px;color:#383838;font-size:11px;transform:scaleX(0.9761);">TH1 Item Description 3</span><span class="t" style="left:611.40px;top:437.70px;color:#383838;font-size:11px;transform:scaleX(1.0000);">Unit</span><span class="t" style="left:14.40px;top:457.70px;color:#383838;font-size:11px;transform:scaleX(1.0000);letter-spacing:0.6px">8.4</span><span class="t" style="left:85.41px;top:455.70px;color:#383838;font-size:11px;transform:scaleX(0.9761);">TH1 Item Description 4</span><span class="t" style="left:611.40px;top:456.70px;color:#383838;font-size:11px;transform:scaleX(1.0000);">Unit</span><span class="t" style="left:14.40px;top:476.70px;color:#383838;font-size:11px;transform:scaleX(1.0000);letter-spacing:0.6px">8.5</span><span class="t" style="left:85.41px;top:474.70px;color:#383838;font-size:11px;transform:scaleX(0.9761);">TH1 Item Description 5</span><span class="t" style="left:611.40px;top:475.70px;color:#383838;font-size:11px;transform:scaleX(1.0000);">Unit</span><span class="t" style="left:14.40px;top:495.70px;color:#383838;font-size:11px;transform:scaleX(1.0000);letter-spacing:0.6px">8.6</span><span class="t" style="left:85.41px;top:493.70px;color:#383838;font-size:11px;transform:scaleX(0.9761);">TH1 Item Description 6</span><span class="t" style="left:611.40px;top:494.70px;color:#383838;font-size:11px;transform:scaleX(1.0000);">Unit</span><span class="t" style="left:14.40px;top:514.70px;color:#383838;font-size:11px;transform:scaleX(1.0000);letter-spacing:0.6px">9</span><span class="t" style="left:71.42px;top:512.70px;color:#383838;font-size:11px;transform:scaleX(0.9722);">Trade Heading2</span><span class="t" style="left:14.40px;top:533.70px;color:#383838;font-size:11px;transform:scaleX(1.0000);letter-spacing:0.6px">9.1</span><span class="t" style="left:85.41px;top:531.70px;color:#383838;font-size:11px;transform:scaleX(0.9761);">TH2 Item Description 1</span><span class="t" style="left:611.40px;top:532.70px;color:#383838;font-size:11px;transform:scaleX(1.0000);">Unit</span><span class="t" style="left:14.40px;top:552.70px;color:#383838;font-size:11px;transform:scaleX(1.0000);letter-spacing:0.6px">9.2</span><span class="t" style="left:85.41px;top:550.70px;color:#383838;font-size:11px;transform:scaleX(0.9761);">TH2 Item Description 2</span><span class="t" style="left:611.40px;top:551.70px;color:#383838;font-size:11px;transform:scaleX(1.0000);">Unit</span><span class="t" style="left:14.40px;top:571.70px;color:#383838;font-size:11px;transform:scaleX(1.0000);letter-spacing:0.6px">9.3</span><span class="t" style="left:85.41px;top:569.70px;color:#383838;font-size:11px;transform:scaleX(0.9761);">TH2 Item Description 3</span><span class="t" style="left:611.40px;top:570.70px;color:#383838;font-size:11px;transform:scaleX(1.0000);">Unit</span><span class="t" style="left:14.40px;top:590.70px;color:#383838;font-size:11px;transform:scaleX(1.0000);letter-spacing:0.6px">9.4</span><span class="t" style="left:85.41px;top:588.70px;color:#383838;font-size:11px;transform:scaleX(0.9761);">TH2 Item Description 4</span><span class="t" style="left:611.40px;top:589.70px;color:#383838;font-size:11px;transform:scaleX(1.0000);">Unit</span><span class="t" style="left:14.40px;top:609.70px;color:#383838;font-size:11px;transform:scaleX(1.0000);letter-spacing:0.6px">9.5</span><span class="t" style="left:85.41px;top:607.70px;color:#383838;font-size:11px;transform:scaleX(0.9761);">TH2 Item Description 5</span><span class="t" style="left:611.40px;top:608.70px;color:#383838;font-size:11px;transform:scaleX(1.0000);">Unit</span><span class="t" style="left:14.40px;top:628.70px;color:#383838;font-size:11px;transform:scaleX(1.0000);letter-spacing:0.6px">10</span><span class="t" style="left:71.42px;top:626.70px;color:#383838;font-size:11px;transform:scaleX(0.9722);">Trade Heading3</span><span class="t" style="left:14.40px;top:647.70px;color:#383838;font-size:11px;transform:scaleX(1.0000);letter-spacing:0.6px">10.1</span><span class="t" style="left:85.41px;top:645.70px;color:#383838;font-size:11px;transform:scaleX(0.9761);">TH3 Item Description 1</span><span class="t" style="left:611.40px;top:646.70px;color:#383838;font-size:11px;transform:scaleX(1.0000);">Unit</span><span class="t" style="left:14.40px;top:666.70px;color:#383838;font-size:11px;transform:scaleX(1.0000);letter-spacing:0.6px">11</span><span class="t" style="left:71.42px;top:664.70px;color:#383838;font-size:11px;transform:scaleX(0.9722);">Trade Heading4</span><span class="t" style="left:14.40px;top:685.70px;color:#383838;font-size:11px;transform:scaleX(1.0000);letter-spacing:0.6px">11.1</span><span class="t" style="left:85.41px;top:683.70px;color:#383838;font-size:11px;transform:scaleX(0.9761);">TH4 Item Description 1</span><span class="t" style="left:611.40px;top:684.70px;color:#383838;font-size:11px;transform:scaleX(1.0000);">Unit</span><span class="t" style="left:14.40px;top:704.70px;color:#383838;font-size:11px;transform:scaleX(1.0000);letter-spacing:0.6px">12</span><span class="t" style="left:71.42px;top:702.70px;color:#383838;font-size:11px;transform:scaleX(0.9722);">Trade Heading5</span><span class="t" style="left:14.40px;top:723.70px;color:#383838;font-size:11px;transform:scaleX(1.0000);letter-spacing:0.6px">12.1</span><span class="t" style="left:85.41px;top:721.70px;color:#383838;font-size:11px;transform:scaleX(0.9761);">TH5 Item Description 1</span><span class="t" style="left:611.40px;top:722.70px;color:#383838;font-size:11px;transform:scaleX(1.0000);">Unit</span><span class="t" style="left:14.40px;top:742.70px;color:#383838;font-size:11px;transform:scaleX(1.0000);letter-spacing:0.6px">12.2</span><span class="t" style="left:85.41px;top:740.70px;color:#383838;font-size:11px;transform:scaleX(0.9761);">TH5 Item Description 2</span><span class="t" style="left:611.40px;top:741.70px;color:#383838;font-size:11px;transform:scaleX(1.0000);">Unit</span><span class="t" style="left:14.40px;top:761.70px;color:#383838;font-size:11px;transform:scaleX(1.0000);letter-spacing:0.6px">12.3</span><span class="t" style="left:85.41px;top:759.70px;color:#383838;font-size:11px;transform:scaleX(0.9761);">TH5 Item Description 3</span><span class="t" style="left:611.40px;top:760.70px;color:#383838;font-size:11px;transform:scaleX(1.0000);">Unit</span><span class="t" style="left:14.40px;top:780.70px;color:#383838;font-size:11px;transform:scaleX(1.0000);letter-spacing:0.6px">12.4</span><span class="t" style="left:85.41px;top:778.70px;color:#383838;font-size:11px;transform:scaleX(0.9761);">TH5 Item Description 4</span><span class="t" style="left:611.40px;top:779.70px;color:#383838;font-size:11px;transform:scaleX(1.0000);">Unit</span><span class="t" style="left:14.40px;top:799.70px;color:#383838;font-size:11px;transform:scaleX(1.0000);letter-spacing:0.6px">12.5</span><span class="t" style="left:85.41px;top:797.70px;color:#383838;font-size:11px;transform:scaleX(0.9761);">TH5 Item Description 5</span><span class="t" style="left:611.40px;top:798.70px;color:#383838;font-size:11px;transform:scaleX(1.0000);">Unit</span>
</body></html>
